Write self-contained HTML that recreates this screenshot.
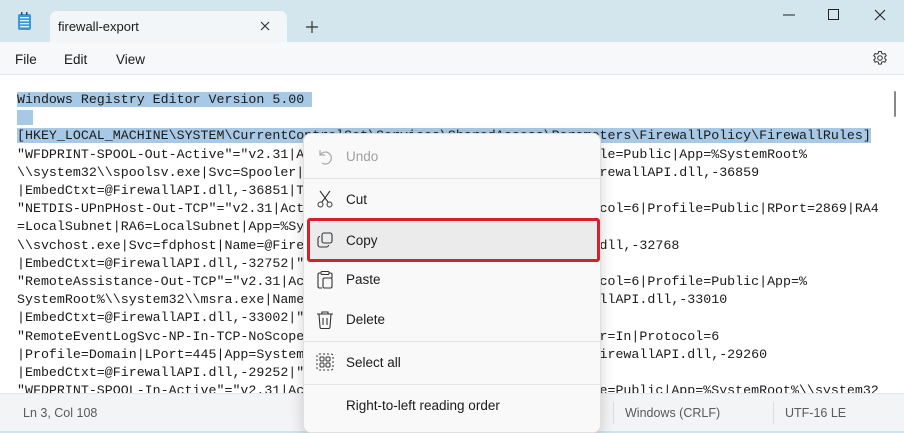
<!DOCTYPE html>
<html><head><meta charset="utf-8"><style>
*{margin:0;padding:0;box-sizing:border-box}
body{width:904px;height:431px;overflow:hidden;background:#cfe3ec;font-family:"Liberation Sans",sans-serif;position:relative}
.title{position:absolute;left:0;top:0;width:904px;height:42px;background:#d3e6ee}
.tab{position:absolute;left:50px;top:11px;width:237px;height:31px;background:#f3f6f8;border-radius:7px 7px 0 0}
.tab span{position:absolute;left:8px;top:8px;font-size:13px;color:#1a1a1a}
.menu{position:absolute;left:0;top:42px;width:904px;height:33px;background:#f6f8f9;border-bottom:1px solid #e3e6e8}
.menu span{position:absolute;top:10px;font-size:13.5px;color:#1a1a1a}
.editor{position:absolute;left:0;top:75px;width:904px;height:318px;background:#fff}
pre{position:absolute;left:17px;top:91px;width:880px;overflow:hidden;font-family:"Liberation Mono",monospace;font-size:13.3px;line-height:18.2px;color:#1a1a1a}
.sel{background:#a8c9e6}
.status{position:absolute;left:0;top:393px;width:904px;height:38px;background:#f3f4f5;border-top:1px solid #e6e6e6;font-size:12.5px;color:#5a5a5a}
.ctx{position:absolute;left:303px;top:133px;width:298px;height:300px;background:#f9f9f9;border:1px solid #e0e0e0;border-radius:8px;box-shadow:0 4px 14px rgba(0,0,0,.18)}
.it{position:absolute;left:42px;font-size:13.5px;color:#1a1a1a}
.sep{position:absolute;left:0;width:296px;height:1px;background:#e5e5e5}
.ic{position:absolute;left:12px}
</style></head><body>
<div class="title">
 <svg style="position:absolute;left:17px;top:12px" width="16" height="20" viewBox="0 0 16 20"><rect x="1" y="2" width="13" height="16" rx="2" fill="#3a9ad8"/><rect x="3" y="5" width="9" height="1.3" fill="#e8f4fc"/><rect x="3" y="8" width="9" height="1.3" fill="#e8f4fc"/><rect x="3" y="11" width="9" height="1.3" fill="#e8f4fc"/><rect x="3" y="14" width="9" height="1.3" fill="#e8f4fc"/><rect x="4" y="0" width="1.4" height="3" fill="#246"/><rect x="9" y="0" width="1.4" height="3" fill="#246"/></svg>
 <div class="tab"><span>firewall-export</span>
  <svg style="position:absolute;left:210px;top:10px" width="10" height="10"><path d="M1 1L9 9M9 1L1 9" stroke="#333" stroke-width="1.2"/></svg></div>
 <svg style="position:absolute;left:306px;top:21px" width="12" height="12"><path d="M6 0V12M0 6H12" stroke="#333" stroke-width="1.2"/></svg>
 <svg style="position:absolute;left:783px;top:14px" width="12" height="2"><path d="M0 1H12" stroke="#222" stroke-width="1"/></svg>
 <svg style="position:absolute;left:828px;top:9px" width="12" height="12"><rect x=".5" y=".5" width="10" height="10" fill="none" stroke="#222"/></svg>
 <svg style="position:absolute;left:874px;top:9px" width="12" height="12"><path d="M1 1L11 11M11 1L1 11" stroke="#222" stroke-width="1.1"/></svg>
</div>
<div class="menu"><span style="left:15px">File</span><span style="left:64px">Edit</span><span style="left:116px">View</span>
 <svg style="position:absolute;left:872px;top:8px" width="16" height="16" viewBox="0 0 16 16"><circle cx="8" cy="8" r="2.3" fill="none" stroke="#333"/><path d="M6.7 1.5h2.6l.4 1.8 1.4.8 1.8-.6 1.3 2.2-1.4 1.300v1.6l1.4 1.3-1.3 2.2-1.8-.6-1.4.8-.4 1.8H6.7l-.4-1.8-1.4-.8-1.8.6-1.3-2.2 1.4-1.3V7l-1.4-1.3 1.3-2.2 1.8.6 1.4-.8z" fill="none" stroke="#333" stroke-width="1"/></svg>
</div>
<div class="editor"><div style="position:absolute;right:8px;top:16px;width:2px;height:26px;background:#888;border-radius:1px"></div></div>
<pre><span class="sel">Windows Registry Editor Version 5.00 </span>
<span class="sel">  </span>
<span class="sel">[HKEY_LOCAL_MACHINE\SYSTEM\CurrentControlSet\Services\SharedAccess\Parameters\FirewallPolicy\FirewallRules]</span>
"WFDPRINT-SPOOL-Out-Active"="v2.31|Action=Allow|Active=TRUE|Dir=Out|Profile=Public|App=%SystemRoot%
\\system32\\spoolsv.exe|Svc=Spooler|Name=@FirewallAPI.dll,-36858|Desc=@FirewallAPI.dll,-36859
|EmbedCtxt=@FirewallAPI.dll,-36851|TTK=...|"
"NETDIS-UPnPHost-Out-TCP"="v2.31|Action=Allow|Active=FALSE|Dir=Outt|Protocol=6|Profile=Public|RPort=2869|RA4
=LocalSubnet|RA6=LocalSubnet|App=%SystemRoot%\\system32
\\svchost.exe|Svc=fdphost|Name=@FirewallAPI.dll,-32767|Desc=@FirewallAPI.dll,-32768
|EmbedCtxt=@FirewallAPI.dll,-32752|"
"RemoteAssistance-Out-TCP"="v2.31|Action=Allow|Active=FALSE|Dir=Out|Protocol=6|Profile=Public|App=%
SystemRoot%\\system32\\msra.exe|Name=@FirewallAPI.dll,-33007|Desc=@FirewallAPI.dll,-33010
|EmbedCtxt=@FirewallAPI.dll,-33002|"
"RemoteEventLogSvc-NP-In-TCP-NoScope"="v2.31|Action=Allow|Active=FALSE|Dir=In|Protocol=6
|Profile=Domain|LPort=445|App=System|Name=@FirewallAPI.dll,-29257|Desc=@FirewallAPI.dll,-29260
|EmbedCtxt=@FirewallAPI.dll,-29252|"
"WFDPRINT-SPOOL-In-Active"="v2.31|Action=Allow|Active=TRUE|Dirs=In|Profile=Public|App=%SystemRoot%\\system32</pre>
<div class="status"><span style="position:absolute;left:23px;top:12px">Ln 3, Col 108</span>
 <div style="position:absolute;left:613px;top:8px;width:1px;height:22px;background:#ddd"></div>
 <span style="position:absolute;left:625px;top:12px">Windows (CRLF)</span>
 <div style="position:absolute;left:773px;top:8px;width:1px;height:22px;background:#ddd"></div>
 <span style="position:absolute;left:785px;top:12px">UTF-16 LE</span></div>
<div class="ctx">
 <svg class="ic" style="top:14px" width="18" height="18" viewBox="0 0 18 18"><path d="M4 2v5h5M4.5 6.5A6 6 0 1 1 6 15" fill="none" stroke="#aaa" stroke-width="1.2"/></svg>
 <span class="it" style="top:15px;color:#a0a0a0">Undo</span>
 <div class="sep" style="top:44px"></div>
 <svg class="ic" style="top:56px" width="18" height="18" viewBox="0 0 18 18"><path d="M4 1l8 11M14 1L6 12" stroke="#333" stroke-width="1.1" fill="none"/><circle cx="4.5" cy="14.5" r="2.5" fill="none" stroke="#333"/><circle cx="13.5" cy="14.5" r="2.5" fill="none" stroke="#333"/></svg>
 <span class="it" style="top:58px">Cut</span>
 <div style="position:absolute;left:3px;top:84px;width:293px;height:44px;background:#ebebeb;border:3px solid #d5202e;border-radius:3px"></div>
 <svg class="ic" style="top:97px" width="18" height="18" viewBox="0 0 18 18"><rect x="6" y="2" width="10" height="10" rx="2" fill="none" stroke="#333" stroke-width="1.1"/><path d="M4 5.5a2 2 0 0 0-2 2V14a2 2 0 0 0 2 2h6.5a2 2 0 0 0 2-2" fill="none" stroke="#333" stroke-width="1.1"/></svg>
 <span class="it" style="top:99px">Copy</span>
 <svg class="ic" style="top:136px" width="18" height="20" viewBox="0 0 18 20"><path d="M5 3H3.5A1.5 1.5 0 0 0 2 4.5v12A1.5 1.5 0 0 0 3.5 18H6M13 3h1.5A1.5 1.5 0 0 1 16 4.5V8" fill="none" stroke="#333" stroke-width="1.1"/><rect x="5" y="1.5" width="8" height="3" rx="1" fill="none" stroke="#333"/><rect x="7" y="8" width="9" height="10" rx="1.5" fill="none" stroke="#333" stroke-width="1.1"/></svg>
 <span class="it" style="top:138px">Paste</span>
 <svg class="ic" style="top:176px" width="18" height="20" viewBox="0 0 18 20"><path d="M1 4h16M6 4V2h6v2M3 4l1 13a1.5 1.5 0 0 0 1.5 1.5h7A1.5 1.5 0 0 0 14 17l1-13M7 8v7M11 8v7" fill="none" stroke="#333" stroke-width="1.1"/></svg>
 <span class="it" style="top:178px">Delete</span>
 <div class="sep" style="top:207px"></div>
 <svg class="ic" style="top:219px" width="18" height="18" viewBox="0 0 18 18"><rect x="1" y="1" width="16" height="16" rx="2" fill="none" stroke="#333" stroke-dasharray="2 2"/><rect x="4" y="4" width="4" height="4" rx="1" fill="none" stroke="#333"/><rect x="10" y="4" width="4" height="4" rx="1" fill="none" stroke="#333"/><rect x="4" y="10" width="4" height="4" rx="1" fill="none" stroke="#333"/><rect x="10" y="10" width="4" height="4" rx="1" fill="none" stroke="#333"/></svg>
 <span class="it" style="top:221px">Select all</span>
 <div class="sep" style="top:250px"></div>
 <span class="it" style="top:264px">Right-to-left reading order</span>
</div>
</body></html>
